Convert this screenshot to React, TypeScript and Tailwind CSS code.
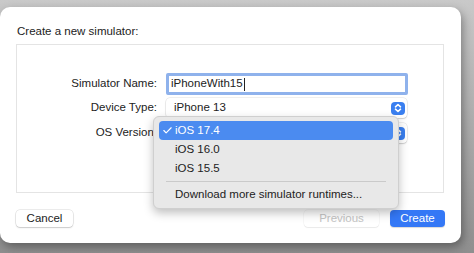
import { Check } from "lucide-react";

function Stepper() {
  return (
    <span className="flex h-[13px] w-[14px] items-center justify-center rounded-[4px] bg-[#3a7ff0]">
      <svg width="8" height="10" viewBox="0 0 8 10" fill="none" stroke="white" strokeWidth="1.6" strokeLinecap="round" strokeLinejoin="round">
        <path d="M1.5 3.8 L4 1.5 L6.5 3.8" />
        <path d="M1.5 6.2 L4 8.5 L6.5 6.2" />
      </svg>
    </span>
  );
}

export default function App() {
  return (
    <div
      className="relative h-[253px] w-[474px] overflow-hidden bg-gradient-to-b from-[#c9c9c9] to-[#8f8f8f] pt-[7px] text-[11.5px] text-[#222]"
      style={{ fontFamily: '"Liberation Sans", Arial, sans-serif' }}
    >
      {/* dialog sheet */}
      <div className="flex h-[236px] w-[461px] flex-col rounded-[10px] bg-white px-[16px] shadow-[2px_4px_10px_rgba(0,0,0,0.35)]">
        <div className="pt-[16px] pl-[1px] leading-[16px]">Create a new simulator:</div>

        <div className="mt-[5px] flex h-[149px] w-[428px] flex-col gap-[3px] border border-[#e4e4e4] bg-white pt-[28px]">
          {/* name row */}
          <div className="flex items-center">
            <div className="w-[149px] pr-[9px] text-right">Simulator Name:</div>
            <div className="flex h-[22px] w-[242px] items-center rounded-[2px] border-[3px] border-[#8fb2ec] bg-white pl-[2px]">
              iPhoneWith15<span className="ml-[1px] h-[13px] w-px bg-[#222]" />
            </div>
          </div>

          {/* device row */}
          <div className="flex items-center">
            <div className="w-[149px] pr-[9px] text-right">Device Type:</div>
            <div className="flex h-[20px] w-[241px] items-center justify-between rounded-[4px] bg-white pl-[8px] pr-[2px] shadow-[0_0_0_0.5px_rgba(0,0,0,0.12),0_1px_1.5px_rgba(0,0,0,0.15)]">
              iPhone 13
              <Stepper />
            </div>
          </div>

          {/* os row, value hidden behind the open menu */}
          <div className="mt-[2px] flex items-center">
            <div className="w-[149px] pr-[9px] text-right">OS Version:</div>
            <div className="flex h-[20px] w-[241px] items-center justify-end rounded-[4px] bg-white pr-[2px] shadow-[0_0_0_0.5px_rgba(0,0,0,0.12),0_1px_1.5px_rgba(0,0,0,0.15)]">
              <Stepper />
            </div>
          </div>
        </div>

        <div className="mt-[17px] flex items-center">
          <button className="h-[17px] w-[57px] rounded-[4px] bg-white leading-[17px] shadow-[0_0_0_0.5px_rgba(0,0,0,0.15),0_1px_1.5px_rgba(0,0,0,0.15)]">
            Cancel
          </button>
          <div className="flex-1" />
          <button className="h-[17px] w-[75px] rounded-[4px] bg-white leading-[17px] text-[#c4c4c4] shadow-[0_0_0_0.5px_rgba(0,0,0,0.06),0_1px_1px_rgba(0,0,0,0.06)]">
            Previous
          </button>
          <button className="ml-[11px] h-[17px] w-[55px] rounded-[4px] bg-[#3478f6] leading-[17px] text-white shadow-[0_1px_1px_rgba(0,0,0,0.15)]">
            Create
          </button>
        </div>
      </div>

      {/* open pop-up menu */}
      <div className="absolute left-[153px] top-[116px] w-[246px] rounded-[6px] border border-[#cfcfcf] bg-[#e8e8e8] px-[5px] py-[4px] shadow-[0_4px_10px_rgba(0,0,0,0.25)]">
        <div className="flex h-[19px] items-center rounded-[4px] bg-[#4b8bf0] pl-[3px] text-white">
          <Check className="h-[11px] w-[11px]" strokeWidth={2.5} />
          <span className="ml-[2px]">iOS 17.4</span>
        </div>
        <div className="flex h-[19px] items-center pl-[16px]">iOS 16.0</div>
        <div className="flex h-[19px] items-center pl-[16px]">iOS 15.5</div>
        <div className="mx-[7px] my-[3px] h-px bg-[#cacaca]" />
        <div className="flex h-[19px] items-center pl-[16px]">Download more simulator runtimes...</div>
      </div>
    </div>
  );
}
